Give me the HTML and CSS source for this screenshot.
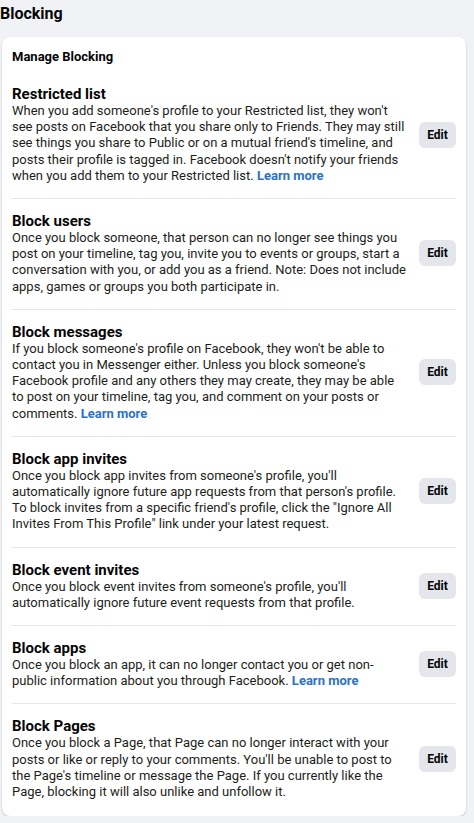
FILE: index.html
```html
<!DOCTYPE html>
<html lang="en">
<head>
<meta charset="utf-8">
<title>Blocking</title>
<link rel="stylesheet" href="styles.css">
</head>
<body>
<h1 class="page-title">Blocking</h1>
<section class="card">
  <h2 class="card-title">Manage Blocking</h2>
  <div class="row">
    <div class="row-text">
      <h3 class="row-title">Restricted list</h3>
      <p class="row-desc">When you add someone's profile to your Restricted list, they won't<br>see posts on Facebook that you share only to Friends. They may still<br>see things you share to Public or on a mutual friend's timeline, and<br>posts their profile is tagged in. Facebook doesn't notify your friends<br>when you add them to your Restricted list. <a class="link" href="#">Learn more</a></p>
    </div>
    <button class="edit">Edit</button>
  </div>
  <div class="row">
    <div class="row-text">
      <h3 class="row-title">Block users</h3>
      <p class="row-desc">Once you block someone, that person can no longer see things you<br>post on your timeline, tag you, invite you to events or groups, start a<br>conversation with you, or add you as a friend. Note: Does not include<br>apps, games or groups you both participate in.</p>
    </div>
    <button class="edit">Edit</button>
  </div>
  <div class="row">
    <div class="row-text">
      <h3 class="row-title">Block messages</h3>
      <p class="row-desc">If you block someone's profile on Facebook, they won't be able to<br>contact you in Messenger either. Unless you block someone's<br>Facebook profile and any others they may create, they may be able<br>to post on your timeline, tag you, and comment on your posts or<br>comments. <a class="link" href="#">Learn more</a></p>
    </div>
    <button class="edit">Edit</button>
  </div>
  <div class="row">
    <div class="row-text">
      <h3 class="row-title">Block app invites</h3>
      <p class="row-desc">Once you block app invites from someone's profile, you'll<br>automatically ignore future app requests from that person's profile.<br>To block invites from a specific friend's profile, click the "Ignore All<br>Invites From This Profile" link under your latest request.</p>
    </div>
    <button class="edit">Edit</button>
  </div>
  <div class="row">
    <div class="row-text">
      <h3 class="row-title">Block event invites</h3>
      <p class="row-desc">Once you block event invites from someone's profile, you'll<br>automatically ignore future event requests from that profile.</p>
    </div>
    <button class="edit">Edit</button>
  </div>
  <div class="row">
    <div class="row-text">
      <h3 class="row-title">Block apps</h3>
      <p class="row-desc">Once you block an app, it can no longer contact you or get non-<br>public information about you through Facebook. <a class="link" href="#">Learn more</a></p>
    </div>
    <button class="edit">Edit</button>
  </div>
  <div class="row">
    <div class="row-text">
      <h3 class="row-title">Block Pages</h3>
      <p class="row-desc">Once you block a Page, that Page can no longer interact with your<br>posts or like or reply to your comments. You'll be unable to post to<br>the Page's timeline or message the Page. If you currently like the<br>Page, blocking it will also unlike and unfollow it.</p>
    </div>
    <button class="edit">Edit</button>
  </div>
</section>
</body>
</html>
```
FILE: styles.css
```css
* { box-sizing: border-box; }
html, body {
  margin: 0;
  padding: 0;
  background: #f0f2f5;
  font-family: Roboto, "Liberation Sans", Arial, sans-serif;
  color: #1c1e21;
}
.page-title {
  margin: 0;
  padding: 4px 0 13px 0;
  font-size: 16px;
  line-height: 20px;
  font-weight: 700;
  color: #050505;
}
.card {
  margin: 0 0 0 2px;
  width: 464px;
  background: #fff;
  border-radius: 8px;
  box-shadow: 0 1px 2px rgba(0, 0, 0, 0.2);
  padding: 12px 10px 2px 10px;
}
.card-title {
  margin: 0 0 7px 0;
  font-size: 13px;
  line-height: 16px;
  font-weight: 700;
  color: #050505;
}
.row {
  display: flex;
  align-items: center;
  gap: 8px;
  padding: 13px 0 14px 0;
  border-bottom: 1px solid #e4e6eb;
}
.row:last-child { border-bottom: none; }
.row-text { flex: 1; min-width: 0; }
.row-title {
  margin: 0;
  font-size: 15px;
  line-height: 18px;
  font-weight: 700;
  color: #050505;
}
.row-desc {
  margin: 0;
  font-size: 13px;
  line-height: 16.2px;
  color: #1c1e21;
}
.link {
  color: #2a72c9;
  font-weight: 700;
  text-decoration: none;
}
.edit {
  flex: none;
  width: 37px;
  height: 26px;
  border: none;
  border-radius: 6px;
  background: #e4e6eb;
  font-family: inherit;
  font-size: 12px;
  font-weight: 700;
  color: #050505;
  padding: 0;
}
```
